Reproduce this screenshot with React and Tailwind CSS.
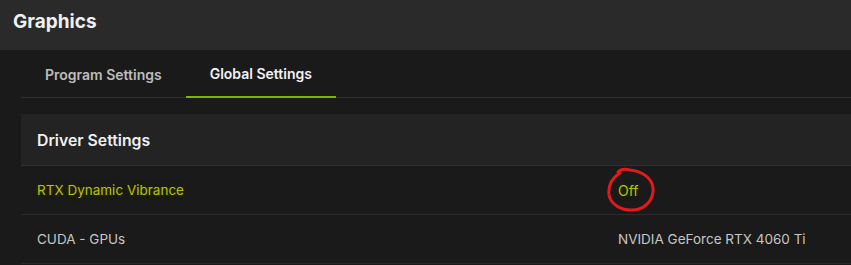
import React from 'react';

const rows = [
  { label: 'RTX Dynamic Vibrance', value: 'Off', active: true },
  { label: 'CUDA - GPUs', value: 'NVIDIA GeForce RTX 4060 Ti' },
];

const Annotation = () => (
  <svg
    className="absolute left-[-12px] top-[-13px] pointer-events-none"
    width="52"
    height="46"
    viewBox="0 0 52 46"
    fill="none"
  >
    <path
      d="M12 5 C15 2 20 2 24 3 C36 4 46 11 47 21 C48 32 40 42 28 43 C16 44 5 38 3 28 C2 19 6 11 14 6"
      stroke="#e01b1b"
      strokeWidth="3"
      strokeLinecap="round"
    />
  </svg>
);

const App = () => {
  return (
    <div className="w-[851px] h-[265px] overflow-hidden bg-[#1a1a1a] font-['Inter',sans-serif]">
      <div className="h-[50px] bg-[#2a2a2a] px-[13px] pt-[9px]">
        <h1 className="text-[19px] leading-[26px] font-bold text-[#f0f0f0]">Graphics</h1>
      </div>

      <div className="pl-[21px]">
        <div className="flex h-[48px] border-b border-[#2e2e2e]">
          <button className="px-6 text-[14px] font-semibold text-[#bdbdbd] -mb-px pt-px">
            Program Settings
          </button>
          <button className="px-6 text-[14px] font-semibold text-[#f2f2f2] border-b-2 border-[#76b900] -mb-px pt-px">
            Global Settings
          </button>
        </div>

        <div className="mt-4">
          <div className="h-[52px] flex items-center pl-4 pt-[3px] bg-[#232323] border-b border-[#303030]">
            <h2 className="text-[15.8px] font-semibold text-[#f0f0f0]">Driver Settings</h2>
          </div>
          {rows.map((row) => (
            <div
              key={row.label}
              className="h-[49px] flex items-center border-b border-[#2a2a2a] text-[13.5px]"
            >
              <div
                className={
                  row.active
                    ? 'w-[597px] pl-4 text-[#b7c20c] [text-shadow:0_0_5px_#2a2a00,0_0_3px_#2a2a00]'
                    : 'w-[597px] pl-4 text-[#c6c6c6]'
                }
              >
                {row.label}
              </div>
              <div
                className={
                  row.active
                    ? 'relative text-[14px] text-[#b7c20c] [text-shadow:0_0_4px_#2a2a00]'
                    : 'relative text-[#c6c6c6]'
                }
              >
                {row.value}
                {row.active && <Annotation />}
              </div>
            </div>
          ))}
        </div>
      </div>
    </div>
  );
};

export default App;
